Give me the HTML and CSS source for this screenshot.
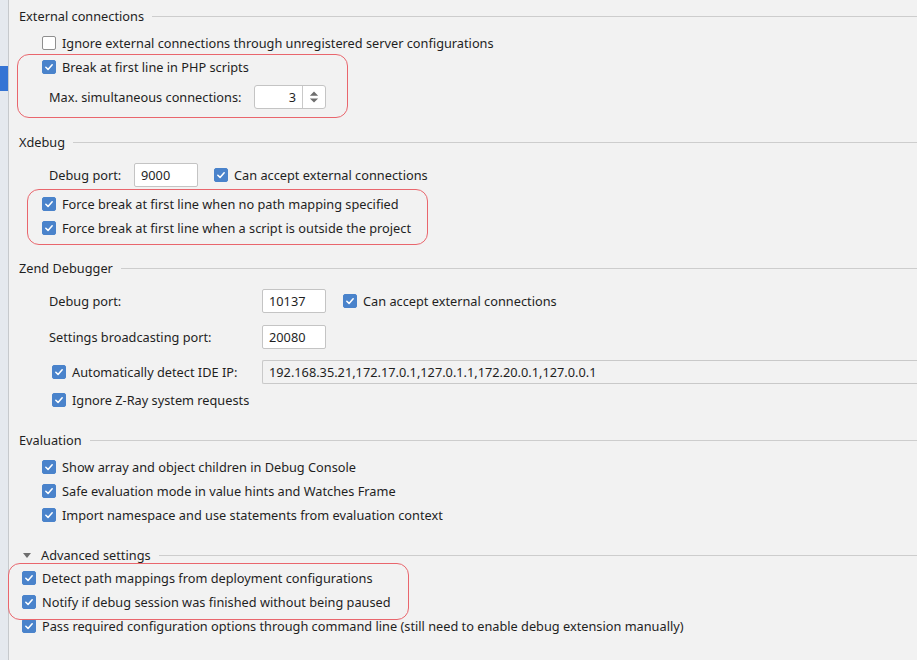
FILE: index.html
```html
<!DOCTYPE html>
<html>
<head>
<meta charset="utf-8">
<link rel="stylesheet" href="styles.css">
</head>
<body>
<div class="window">
  <aside class="sidebar"><div class="sel"></div></aside>
  <main class="content">
    <div class="hdr h-ext"><span>External connections</span><i class="rule"></i></div>
    <div class="row ind mt5"><span class="cb"></span><span>Ignore external connections through unregistered server configurations</span></div>
    <div class="mark m1">
      <div class="row ind"><span class="cb on"><svg viewBox="0 0 14 14"><path d="M3.3 7.3 L5.9 9.8 L10.7 4.4"/></svg></span><span>Break at first line in PHP scripts</span></div>
      <div class="row lbl mt6"><span class="label w-max">Max. simultaneous connections:</span>
        <span class="spinner"><span class="num">3</span><span class="arrows"><svg viewBox="0 0 23 24"><path d="M7 10.5 L11.5 6 L16 10.5 Z M7 13.5 L11.5 18 L16 13.5 Z"/></svg></span></span>
      </div>
    </div>

    <div class="hdr h-after-m1"><span>Xdebug</span><i class="rule"></i></div>
    <div class="row lbl mt11"><span class="label w-dp">Debug port:</span><span class="field f64">9000</span>
      <span class="cb on ml16"><svg viewBox="0 0 14 14"><path d="M3.3 7.3 L5.9 9.8 L10.7 4.4"/></svg></span><span>Can accept external connections</span></div>
    <div class="mark m2">
      <div class="row ind mt5"><span class="cb on"><svg viewBox="0 0 14 14"><path d="M3.3 7.3 L5.9 9.8 L10.7 4.4"/></svg></span><span>Force break at first line when no path mapping specified</span></div>
      <div class="row ind"><span class="cb on"><svg viewBox="0 0 14 14"><path d="M3.3 7.3 L5.9 9.8 L10.7 4.4"/></svg></span><span>Force break at first line when a script is outside the project</span></div>
    </div>

    <div class="hdr h-sec"><span>Zend Debugger</span><i class="rule"></i></div>
    <div class="row lbl mt11"><span class="label w-zd">Debug port:</span><span class="field f64">10137</span>
      <span class="cb on ml17"><svg viewBox="0 0 14 14"><path d="M3.3 7.3 L5.9 9.8 L10.7 4.4"/></svg></span><span>Can accept external connections</span></div>
    <div class="row lbl mt12"><span class="label w-zd">Settings broadcasting port:</span><span class="field f64">20080</span></div>
    <div class="row zind mt11"><span class="cb on"><svg viewBox="0 0 14 14"><path d="M3.3 7.3 L5.9 9.8 L10.7 4.4"/></svg></span><span class="label w-ip">Automatically detect IDE IP:</span><span class="field ipfield">192.168.35.21,172.17.0.1,127.0.1.1,172.20.0.1,127.0.0.1</span></div>
    <div class="row zind mt4"><span class="cb on"><svg viewBox="0 0 14 14"><path d="M3.3 7.3 L5.9 9.8 L10.7 4.4"/></svg></span><span>Ignore Z-Ray system requests</span></div>

    <div class="hdr h-sec"><span>Evaluation</span><i class="rule"></i></div>
    <div class="row ind mt5"><span class="cb on"><svg viewBox="0 0 14 14"><path d="M3.3 7.3 L5.9 9.8 L10.7 4.4"/></svg></span><span>Show array and object children in Debug Console</span></div>
    <div class="row ind"><span class="cb on"><svg viewBox="0 0 14 14"><path d="M3.3 7.3 L5.9 9.8 L10.7 4.4"/></svg></span><span>Safe evaluation mode in value hints and Watches Frame</span></div>
    <div class="row ind"><span class="cb on"><svg viewBox="0 0 14 14"><path d="M3.3 7.3 L5.9 9.8 L10.7 4.4"/></svg></span><span>Import namespace and use statements from evaluation context</span></div>

    <div class="hdr h-sec h-adv"><span class="tri"></span><span>Advanced settings</span><i class="rule"></i></div>
    <div class="mark m3">
      <div class="row aind mt1"><span class="cb on"><svg viewBox="0 0 14 14"><path d="M3.3 7.3 L5.9 9.8 L10.7 4.4"/></svg></span><span>Detect path mappings from deployment configurations</span></div>
      <div class="row aind"><span class="cb on"><svg viewBox="0 0 14 14"><path d="M3.3 7.3 L5.9 9.8 L10.7 4.4"/></svg></span><span>Notify if debug session was finished without being paused</span></div>
    </div>
    <div class="row aind"><span class="cb on"><svg viewBox="0 0 14 14"><path d="M3.3 7.3 L5.9 9.8 L10.7 4.4"/></svg></span><span>Pass required configuration options through command line (still need to enable debug extension manually)</span></div>
  </main>
</div>
</body>
</html>
```
FILE: styles.css
```css
* { box-sizing: border-box; }
html, body { margin: 0; padding: 0; }
body {
  width: 917px;
  height: 660px;
  overflow: hidden;
  background: #f2f2f2;
  font-family: "Noto Sans", "DejaVu Sans", sans-serif;
  font-size: 12.75px;
  color: #1f1f1f;
}
.window { display: flex; height: 660px; }
.sidebar {
  width: 9px;
  flex: none;
  background: #e5e9ee;
  border-right: 1px solid #c6c9cc;
  padding-top: 66px;
}
.sel { width: 8px; height: 25px; background: #3574d4; }
.content { flex: 1; min-width: 0; }

.hdr {
  display: flex;
  align-items: center;
  height: 20px;
  padding-left: 10px;
  white-space: nowrap;
}
.hdr .rule { flex: 1; height: 1px; background: #cdcdcd; margin-left: 8px; }
.h-ext { margin-top: 6px; }
.h-sec { margin-top: 18px; }
.h-after-m1 { margin-top: 23px; }
.h-adv { padding-left: 14px; }
.tri {
  width: 0; height: 0;
  border-left: 4px solid transparent;
  border-right: 4px solid transparent;
  border-top: 5px solid #6e6e6e;
  margin-right: 10px;
  margin-top: 1px;
}

.row {
  display: flex;
  align-items: center;
  height: 24px;
  white-space: nowrap;
}
.ind { padding-left: 33px; }
.lbl { padding-left: 40px; }
.zind { padding-left: 43px; }
.aind { padding-left: 13px; }
.mt1 { margin-top: 1px; }
.mt4 { margin-top: 4px; }
.mt5 { margin-top: 5px; }
.mt6 { margin-top: 6px; }
.mt11 { margin-top: 11px; }
.mt12 { margin-top: 12px; }

.cb {
  width: 14px; height: 14px;
  flex: none;
  border-radius: 2px;
  border: 1px solid #8f8f8f;
  background: #ffffff;
  margin-right: 6px;
  display: flex;
}
.cb.on { background: #4a83cb; border-color: #4a83cb; }
.cb svg { width: 12px; height: 12px; }
.cb path { fill: none; stroke: #fff; stroke-width: 1.8; stroke-linecap: round; stroke-linejoin: round; }
.ml16 { margin-left: 16px; }
.ml17 { margin-left: 17px; }

.label { flex: none; }
.w-max { width: 205px; }
.w-dp { width: 85px; }
.w-zd { width: 213px; }
.w-ip { width: 190px; }

.field {
  height: 24px;
  border: 1px solid #c4c4c4;
  border-radius: 2px;
  background: #fff;
  padding-left: 6px;
  display: flex;
  align-items: center;
  flex: none;
}
.f64 { width: 64px; }
.ipfield {
  flex: 1;
  background: #f2f2f2;
  border-color: #c9c9c9;
  border-right: none;
  border-radius: 2px 0 0 2px;
}

.spinner {
  width: 72px; height: 24px;
  border: 1px solid #c4c4c4;
  border-radius: 3px;
  background: #fff;
  display: flex;
  flex: none;
}
.num { flex: 1; text-align: right; padding-right: 6px; line-height: 22px; }
.arrows { width: 23px; border-left: 1px solid #c9c9c9; display: flex; }
.arrows svg { width: 22px; height: 22px; }
.arrows path { fill: #6e6e6e; }

.mark { position: relative; }
.mark::before {
  content: "";
  position: absolute;
  border: 1.5px solid #e9666d;
  border-radius: 12px;
  pointer-events: none;
}
.m1::before { left: 8px; width: 329px; top: -1px; bottom: -9px; }
.m2::before { left: 18px; width: 399px; top: -3px; bottom: -5px; }
.m3::before { left: -1px; width: 399px; top: -3px; bottom: -6px; }
```
